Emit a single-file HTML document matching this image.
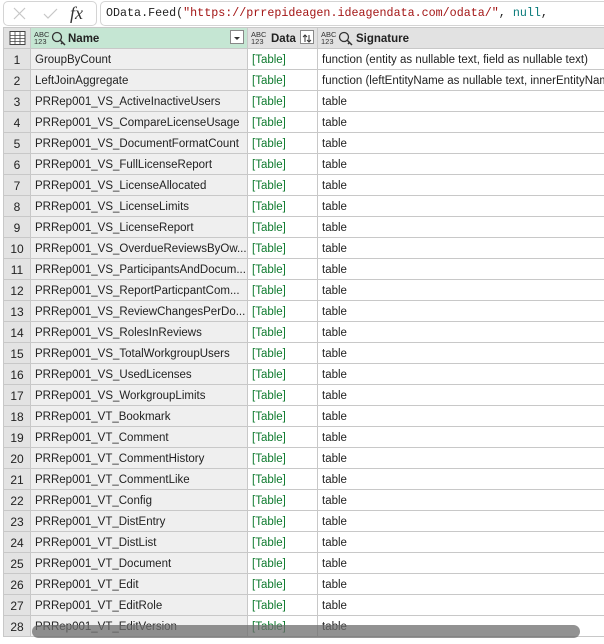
<!DOCTYPE html>
<html><head><style>
body{margin:0;width:604px;height:644px;overflow:hidden;background:#fff;font-family:"Liberation Sans",Arial,sans-serif;position:relative;color:#222}
.btns{position:absolute;left:3px;top:1px;width:92px;height:23px;border:1px solid #d4d4d4;border-radius:5px;background:#fff}
.inp{position:absolute;left:100px;top:1px;width:520px;height:23px;border:1px solid #d4d4d4;border-radius:5px;font-family:"Liberation Mono",monospace;font-size:11.7px;line-height:23px;padding-left:5px;white-space:nowrap;color:#222}
.s{color:#a31515}.n{color:#097a7a}
.row{position:absolute;left:3px;height:21px;width:640px;font-size:11.5px}
.c{position:absolute;top:0;height:21px;line-height:22px;border-right:1px solid #c8c8c8;border-bottom:1px solid #c8c8c8;white-space:nowrap;overflow:hidden;box-sizing:border-box;padding-left:4px}
.c0{left:0;width:28px;background:#e3e3e3;text-align:center;padding:0;border-left:1px solid #c8c8c8;font-size:12px}
.c1{left:28px;width:217px;background:#efefef}
.c2{left:245px;width:70px;color:#0e7a2e}
.c3{left:315px;width:330px}
.h .c{height:22px;line-height:20px;background:#e2e2e2;font-weight:bold;border-top:1px solid #c8c8c8}
.h .c1{background:#c5e6d3}
.t{position:absolute;top:3px;font-size:7.5px;line-height:7px;font-weight:normal;color:#333}
.sb{position:absolute;left:32px;top:625px;width:548px;height:13px;border-radius:7px;background:rgba(110,110,110,.75)}
.box{position:absolute;top:2px;width:14px;height:14px;border:1px solid #888;background:#fff;box-sizing:border-box}
</style></head><body>
<div class="btns">
<svg width="92" height="23" style="position:absolute;left:0;top:0"><path d="M10 6l11 11M21 6L10 17" stroke="#c6c6c6" stroke-width="1.2" fill="none"/><path d="M40 12l4 4 9-9" stroke="#c6c6c6" stroke-width="1.2" fill="none"/><text x="66" y="17" font-family="Liberation Serif" font-style="italic" font-size="18" fill="#333">fx</text></svg>
</div>
<div class="inp">OData.Feed(<span class="s">"https://prrepideagen.ideagendata.com/odata/"</span>, <span class="n">null</span>,</div>

<div class="row h" style="top:27px">
<div class="c c0"><svg width="26" height="20"><rect x="6" y="3.5" width="15" height="13" fill="#fff" stroke="#444"/><path d="M6 7.5h15M6 10.5h15M6 13.5h15M11 3.5v13M16 3.5v13" stroke="#444" stroke-width=".8"/></svg></div>
<div class="c c1"><span class="t" style="left:3px">ABC<br>123</span><svg style="position:absolute;left:20px;top:3px" width="16" height="15"><circle cx="6" cy="6" r="4.5" fill="none" stroke="#333" stroke-width="1.3"/><path d="M9 9l5 5M11.5 11.5l-1.5 1.5" stroke="#333" stroke-width="1.5"/></svg><span style="position:absolute;left:37px;top:1px">Name</span><span class="box" style="right:3px"><svg width="12" height="12"><path d="M3 5h6l-3 3z" fill="#333"/></svg></span></div>
<div class="c c2" style="color:#222"><span class="t" style="left:3px">ABC<br>123</span><span style="position:absolute;left:23px;top:1px">Data</span><span class="box" style="right:3px"><svg width="12" height="12"><path d="M4 10V3M2 5l2-2 2 2M8 3v7M6 8l2 2 2-2" stroke="#333" fill="none"/></svg></span></div>
<div class="c c3"><span class="t" style="left:3px">ABC<br>123</span><svg style="position:absolute;left:20px;top:3px" width="16" height="15"><circle cx="6" cy="6" r="4.5" fill="none" stroke="#333" stroke-width="1.3"/><path d="M9 9l5 5M11.5 11.5l-1.5 1.5" stroke="#333" stroke-width="1.5"/></svg><span style="position:absolute;left:38px;top:1px">Signature</span></div>
</div>
<div id="rows"></div>
<div style="position:absolute;left:0;top:637px;width:604px;height:7px;background:#fff"></div>
<div class="sb"></div>
<script>
var n=["GroupByCount","LeftJoinAggregate","PRRep001_VS_ActiveInactiveUsers","PRRep001_VS_CompareLicenseUsage","PRRep001_VS_DocumentFormatCount","PRRep001_VS_FullLicenseReport","PRRep001_VS_LicenseAllocated","PRRep001_VS_LicenseLimits","PRRep001_VS_LicenseReport","PRRep001_VS_OverdueReviewsByOw...","PRRep001_VS_ParticipantsAndDocum...","PRRep001_VS_ReportParticpantCom...","PRRep001_VS_ReviewChangesPerDo...","PRRep001_VS_RolesInReviews","PRRep001_VS_TotalWorkgroupUsers","PRRep001_VS_UsedLicenses","PRRep001_VS_WorkgroupLimits","PRRep001_VT_Bookmark","PRRep001_VT_Comment","PRRep001_VT_CommentHistory","PRRep001_VT_CommentLike","PRRep001_VT_Config","PRRep001_VT_DistEntry","PRRep001_VT_DistList","PRRep001_VT_Document","PRRep001_VT_Edit","PRRep001_VT_EditRole","PRRep001_VT_EditVersion"];
var s=["function (entity as nullable text, field as nullable text)","function (leftEntityName as nullable text, innerEntityName"];
var h="";for(var i=0;i<n.length;i++){h+='<div class="row" style="top:'+(49+i*21)+'px"><div class="c c0">'+(i+1)+'</div><div class="c c1">'+n[i]+'</div><div class="c c2">[Table]</div><div class="c c3">'+(s[i]||"table")+'</div></div>';}
document.getElementById("rows").innerHTML=h;
</script>
</body></html>
